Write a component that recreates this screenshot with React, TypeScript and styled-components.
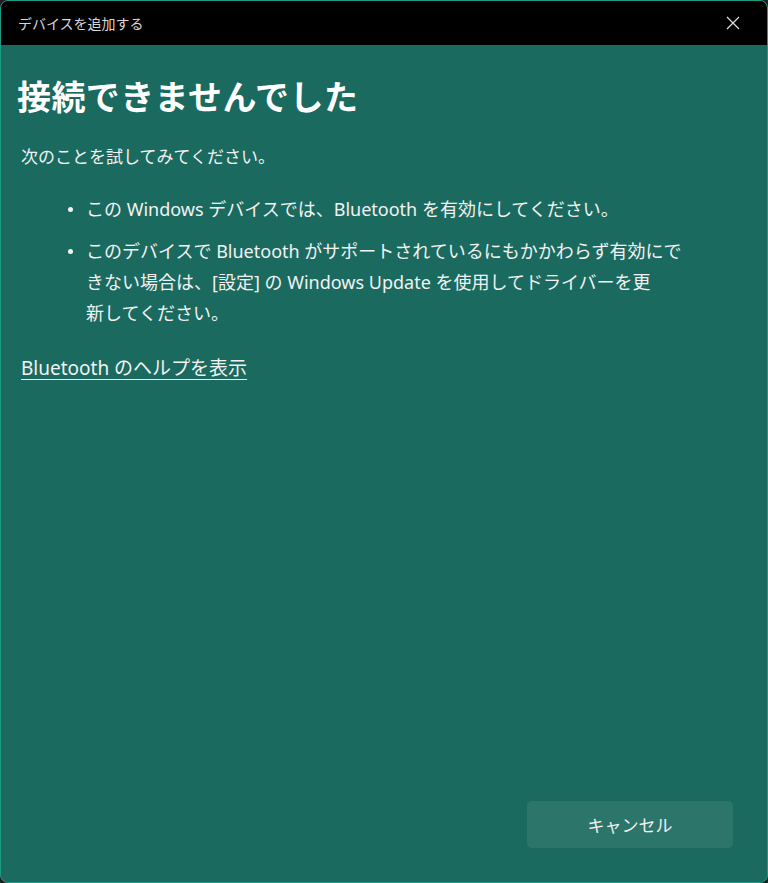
import React from "react";
import styled, { createGlobalStyle } from "styled-components";

const Global = createGlobalStyle`
  html, body {
    margin: 0;
    padding: 0;
    background: #1f1f1f;
  }
  * { box-sizing: border-box; }
`;

const Window = styled.div`
  width: 768px;
  height: 883px;
  border: 1px solid #1b9b84;
  border-radius: 8px;
  overflow: hidden;
  display: flex;
  flex-direction: column;
  background: #1a6a5f;
  font-family: "Noto Sans", "Noto Sans CJK JP", sans-serif;
  color: #ffffff;
`;

const TitleBar = styled.div`
  height: 44px;
  flex: none;
  background: #000000;
  display: flex;
  align-items: center;
  justify-content: space-between;
  padding: 0 20px 0 17px;
`;

const TitleText = styled.span`
  font-size: 14px;
  color: #d8d8d8;
  font-family: "Noto Sans CJK JP", sans-serif;
`;

const CloseButton = styled.button`
  width: 28px;
  height: 28px;
  padding: 0;
  border: none;
  background: transparent;
  display: flex;
  align-items: center;
  justify-content: center;
  color: #e0e0e0;
`;

const Content = styled.div`
  flex: 1;
  display: flex;
  flex-direction: column;
  padding: 26px 20px 34px 18px;
`;

const Heading = styled.h1`
  margin: 0 0 0 -2px;
  font-family: "Noto Sans CJK JP", sans-serif;
  font-size: 34px;
  font-weight: 600;
  line-height: 50px;
  letter-spacing: 0.4px;
`;

const Intro = styled.p`
  margin: 21px 0 0 2px;
  font-family: "Noto Sans CJK JP", sans-serif;
  font-size: 17px;
  line-height: 28px;
  color: #f2f2f2;
`;

const List = styled.ul`
  margin: 24px 0 0 0;
  padding: 0 0 0 44px;
  list-style: none;
  display: flex;
  flex-direction: column;
  gap: 11px;
`;

const Item = styled.li`
  display: grid;
  grid-template-columns: 23px 1fr;
  font-size: 18px;
  line-height: 31px;
  color: #f2f2f2;
`;

const Bullet = styled.span`
  height: 31px;
  display: flex;
  align-items: center;
  padding-left: 5px;
  &::before {
    content: "";
    width: 5px;
    height: 5px;
    border-radius: 50%;
    background: #f2f2f2;
  }
`;

const HelpLink = styled.a`
  margin: 26px 0 0 2px;
  align-self: flex-start;
  font-size: 19px;
  line-height: 26px;
  color: #f2f2f2;
  text-decoration: underline;
  text-underline-offset: 4px;
  text-decoration-thickness: 1px;
  cursor: pointer;
`;

const Footer = styled.div`
  margin-top: auto;
  display: flex;
  justify-content: flex-end;
  padding-right: 14px;
`;

const CancelButton = styled.button`
  width: 206px;
  height: 47px;
  border: none;
  border-radius: 5px;
  background: rgba(255, 255, 255, 0.08);
  color: #f2f2f2;
  font-family: "Noto Sans CJK JP", sans-serif;
  font-size: 17px;
`;

export default function App() {
  return (
    <>
      <Global />
      <Window>
        <TitleBar>
          <TitleText>デバイスを追加する</TitleText>
          <CloseButton aria-label="閉じる">
            <svg width="14" height="14" viewBox="0 0 14 14">
              <path d="M1 1 L13 13 M13 1 L1 13" stroke="currentColor" strokeWidth="1.2" fill="none" />
            </svg>
          </CloseButton>
        </TitleBar>
        <Content>
          <Heading>接続できませんでした</Heading>
          <Intro>次のことを試してみてください。</Intro>
          <List>
            <Item>
              <Bullet />
              <span>この Windows デバイスでは、Bluetooth を有効にしてください。</span>
            </Item>
            <Item>
              <Bullet />
              <span>
                このデバイスで Bluetooth がサポートされているにもかかわらず有効にで
                <br />
                きない場合は、[設定] の Windows Update を使用してドライバーを更
                <br />
                新してください。
              </span>
            </Item>
          </List>
          <HelpLink>Bluetooth のヘルプを表示</HelpLink>
          <Footer>
            <CancelButton>キャンセル</CancelButton>
          </Footer>
        </Content>
      </Window>
    </>
  );
}
